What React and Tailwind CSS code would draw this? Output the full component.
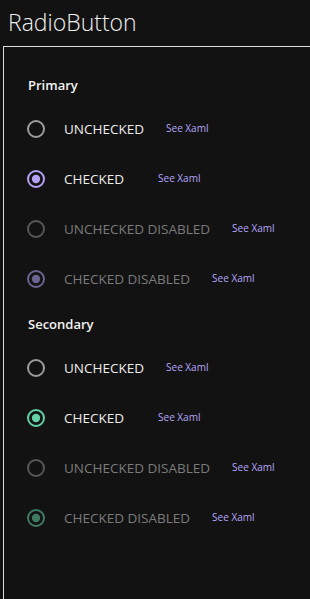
import React from 'react';

const FONT = { fontFamily: '"Open Sans", "Noto Sans", "Liberation Sans", sans-serif' };

const COLORS = {
  primary: { on: '#b3a0f7', off: '#6c6391' },
  secondary: { on: '#63d1a6', off: '#3f7b63' },
};

const Radio = ({ checked, disabled, tone }) => {
  const c = COLORS[tone];
  const ring = checked ? (disabled ? c.off : c.on) : disabled ? '#575757' : '#9c9c9c';
  return (
    <svg width="18" height="18" viewBox="0 0 18 18" className="shrink-0">
      <circle cx="9" cy="9" r="8" fill="none" stroke={ring} strokeWidth="2" />
      {checked && <circle cx="9" cy="9" r="4.2" fill={ring} />}
    </svg>
  );
};

const ROWS = [
  { label: 'UNCHECKED', checked: false, disabled: false, gap: 'ml-[22px]' },
  { label: 'CHECKED', checked: true, disabled: false, gap: 'ml-[34px]' },
  { label: 'UNCHECKED DISABLED', checked: false, disabled: true, gap: 'ml-[22px]' },
  { label: 'CHECKED DISABLED', checked: true, disabled: true, gap: 'ml-[22px]' },
];

const Section = ({ title, tone, first }) => (
  <div className="flex flex-col">
    <div className={`${first ? 'mt-[29px]' : 'mt-[11px]'} ml-px h-5 flex items-center text-[13px] font-semibold text-[#f2f2f2]`}>
      {title}
    </div>
    <div className="mt-2 flex flex-col">
      {ROWS.map(r => (
        <div key={r.label} className="h-[50px] flex items-center">
          <Radio checked={r.checked} disabled={r.disabled} tone={tone} />
          <span className={`ml-[19px] text-[13.5px] ${r.disabled ? 'text-[#7b7b7b]' : 'text-[#ededed]'}`}>
            {r.label}
          </span>
          <span className={`${r.gap} -mt-[2px] text-[10px] text-[#b5a6fb]`}>See Xaml</span>
        </div>
      ))}
    </div>
  </div>
);

export default function App() {
  return (
    <div style={FONT} className="w-[310px] h-[599px] bg-[#121212] flex flex-col overflow-hidden">
      <div className="h-[46px] pl-2 flex items-center text-[23px] font-light text-[#f0f0f0] pb-[2px]">
        RadioButton
      </div>
      <div className="ml-[3px] flex-1 border-t border-l border-[#dcdcdc] pl-[23px]">
        <Section title="Primary" tone="primary" first />
        <Section title="Secondary" tone="secondary" />
      </div>
    </div>
  );
}
